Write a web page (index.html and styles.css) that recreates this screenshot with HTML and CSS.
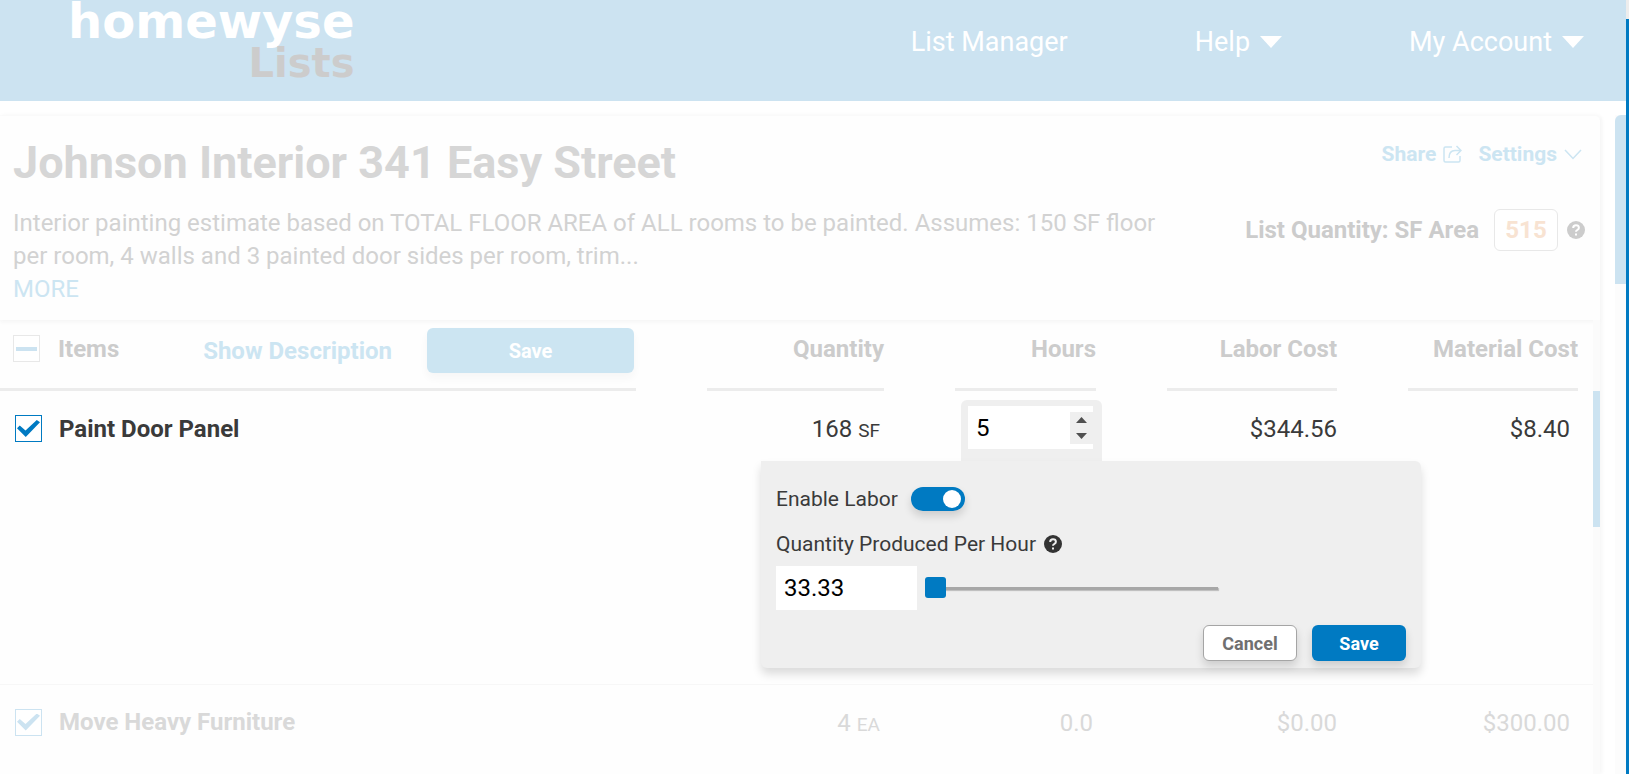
FILE: index.html
```html
<!DOCTYPE html>
<html lang="en">
<head>
  <meta charset="UTF-8" />
  <meta name="viewport" content="width=device-width, initial-scale=1.0"/>
  <title>homewyse Lists</title>
  <link rel="stylesheet" href="styles.css">
</head>
<body>

<div class="page">
  <header class="topbar">
    <a class="logo" href="#">
      <span class="logo-name">homewyse</span>
      <span class="logo-sub">Lists</span>
    </a>
    <nav class="nav">
      <a href="#">List Manager</a>
      <a href="#">Help <svg class="caret" viewBox="0 0 22 12"><path d="M0 0h22L11 12z"/></svg></a>
      <a href="#">My Account <svg class="caret" viewBox="0 0 22 12"><path d="M0 0h22L11 12z"/></svg></a>
    </nav>
  </header>

  <main class="main">
    <section class="panel">
      <div class="panel-head">
        <div class="about">
          <h1>Johnson Interior 341 Easy Street</h1>
          <p>Interior painting estimate based on TOTAL FLOOR AREA of ALL rooms to be painted. Assumes: 150 SF floor per room, 4 walls and 3 painted door sides per room, trim...</p>
          <a class="more" href="#">MORE</a>
        </div>
        <div class="side">
          <div class="actions">
            <a href="#">Share
              <svg width="19" height="18" viewBox="0 0 19 18"><path d="M9 2H2.500Q1 2 1 3.500V15.500Q1 17 2.500 17H15.500Q17 17 17 15.500V11M6 13Q6 5.500 12 5.500H17.500M13.500 1L18 5.500L13.500 10"/></svg>
            </a>
            <a href="#">Settings
              <svg width="18" height="11" viewBox="0 0 18 11"><path d="M1 1l8 8.500L17 1"/></svg>
            </a>
          </div>
          <div class="list-qty">
            <label for="listQty">List Quantity: SF Area</label>
            <input id="listQty" type="text" value="515">
            <svg class="help" viewBox="0 0 18 18"><circle cx="9" cy="9" r="9"/><path d="M6.200 7Q6.200 4.300 9 4.300T11.900 6.700Q11.900 8 10.400 8.800Q9 9.500 9 10.700M9 12.400V14.400"/></svg>
          </div>
        </div>
      </div>

      <div class="items">
        <table>
          <colgroup>
            <col><col class="c-qty"><col class="c-hours"><col class="c-cost"><col class="c-cost"><col class="c-end">
          </colgroup>
          <thead>
            <tr>
              <th>
                <div class="head first">
                  <input class="check some" type="checkbox" id="all">
                  <label for="all">Items</label>
                  <a class="show" href="#">Show Description</a>
                  <button class="save-all">Save</button>
                </div>
              </th>
              <th><div class="head">Quantity</div></th>
              <th><div class="head">Hours</div></th>
              <th><div class="head">Labor Cost</div></th>
              <th><div class="head">Material Cost</div></th>
              <th></th>
            </tr>
          </thead>
          <tbody>
            <tr class="open">
              <td>
                <div class="item">
                  <input class="check" type="checkbox" id="item1" checked>
                  <label for="item1">Paint Door Panel</label>
                </div>
              </td>
              <td class="qty">168 <small>SF</small></td>
              <td class="hours">
                <div class="tab">
                  <div class="stepper">
                    <input type="number" id="hours" aria-label="Hours" value="5">
                    <div class="arrows">
                      <button onclick="step(1)" aria-label="Increase hours"><svg viewBox="0 0 11 6"><path d="M0 6h11L5.500 0z"/></svg></button>
                      <button onclick="step(-1)" aria-label="Decrease hours"><svg viewBox="0 0 11 6"><path d="M0 0h11L5.500 6z"/></svg></button>
                    </div>
                  </div>
                  <div class="popup">
                    <div class="line">
                      <label for="labor">Enable Labor</label>
                      <input class="toggle" type="checkbox" id="labor" checked>
                    </div>
                    <div class="line">
                      <label for="rate">Quantity Produced Per Hour</label>
                      <svg class="help" viewBox="0 0 18 18"><circle cx="9" cy="9" r="9"/><path d="M6.200 7Q6.200 4.300 9 4.300T11.900 6.700Q11.900 8 10.400 8.800Q9 9.500 9 10.700M9 12.400V14.400"/></svg>
                    </div>
                    <div class="rate">
                      <input class="rate-box" type="text" id="rate" value="33.33">
                      <input class="slider" type="range" aria-label="Quantity per hour" min="0" max="100" value="0">
                    </div>
                    <div class="buttons">
                      <button class="cancel">Cancel</button>
                      <button class="save">Save</button>
                    </div>
                  </div>
                </div>
              </td>
              <td>$344.56</td>
              <td class="material">$8.40</td>
              <td></td>
            </tr>
            <tr class="faded">
              <td>
                <div class="item">
                  <input class="check" type="checkbox" id="item2" checked>
                  <label for="item2">Move Heavy Furniture</label>
                </div>
              </td>
              <td class="qty">4 <small>EA</small></td>
              <td class="hours">0.0</td>
              <td>$0.00</td>
              <td class="material">$300.00</td>
              <td></td>
            </tr>
          </tbody>
        </table>
        <div class="items-scroll"><div class="items-thumb"></div></div>
      </div>
    </section>
    <div class="page-scroll"><div class="page-thumb"></div></div>
  </main>
</div>
<div class="edge"></div>

<script>
  const hours = document.getElementById('hours');

  function step(n) {
    hours.value = Math.max(0, Number(hours.value) + n);
  }
</script>

</body>
</html>
```

FILE: styles.css
```css
* { box-sizing: border-box; }

body {
  margin: 0; background: #fff; color: #3a3a3a;
  font-family: Roboto, sans-serif; font-size: 24px;
  display: flex; height: 100vh; overflow: hidden;
}

a { color: #cce5f2; text-decoration: none; }
button, input { font-family: inherit; margin: 0; }
button { cursor: pointer; }
h1, p { margin: 0; }

.page { flex: 1; display: flex; flex-direction: column; min-width: 0; }

.edge {
  width: 3px; background: #007ac2; border-top: 19px solid #ededed;
}

/* top bar */
.topbar {
  flex: none; height: 101px; padding: 0 42px 0 68px;
  background: #cce3f1;
  display: flex; justify-content: space-between; align-items: flex-start;
}

.logo {
  display: flex; flex-direction: column; align-items: flex-end;
  font-family: "DejaVu Sans", Verdana, sans-serif; font-weight: bold;
}
.logo-name { font-size: 48px; line-height: 42px; color: #fff; }
.logo-sub { font-size: 40px; line-height: 42px; color: #ccc; }

.nav { display: flex; gap: 127px; padding-top: 26px; font-size: 27px; line-height: 32px; }
.nav a { color: #fff; display: flex; align-items: center; gap: 10px; }
.caret { width: 22px; height: 12px; fill: #fff; }

/* list header */
.main { flex: 1; display: flex; gap: 15px; padding-top: 14px; min-height: 0; }

.panel {
  flex: 1; min-width: 0; display: flex; flex-direction: column;
  background: #fefefe; border-top: 1px solid #fbfbfb;
  border-radius: 0 6px 0 0; box-shadow: 2px 0 4px #f6f6f6;
}

.panel-head {
  flex: none; min-height: 204px; padding: 20px 15px 0 13px;
  display: flex; justify-content: space-between;
  box-shadow: 0 2px 4px #f5f5f5;
}

.about { flex: 1; max-width: 1180px; line-height: 33px; color: #d2d2d2; }
h1 { font-size: 45px; line-height: 53px; font-weight: 700; color: #d6d6d6; margin-bottom: 18px; }

.side { display: flex; flex-direction: column; align-items: flex-end; }
.actions { display: flex; gap: 16px; font-size: 21px; line-height: 36px; font-weight: 700; padding-right: 3px; }
.actions a { display: flex; align-items: center; gap: 7px; }
.actions svg { fill: none; stroke: #cce5f2; stroke-width: 1.5; }

.list-qty {
  display: flex; align-items: center; margin-top: 37px;
  font-weight: 700; color: #ccc;
}
.list-qty input {
  width: 64px; height: 42px; margin: 0 9px 0 15px; padding: 0;
  border: 1px solid #e8e8e8; border-radius: 6px; background: #fff;
  font-size: 24px; font-weight: 700; text-align: center; color: #f8e3d2;
}

.help { width: 18px; height: 18px; fill: #333; }
.help path { fill: none; stroke: #efefef; stroke-width: 2; }
.list-qty .help { fill: #ccc; }
.list-qty .help path { stroke: #fff; }

/* items table */
.items { flex: 1; display: flex; align-items: flex-start; min-height: 0; }
table { flex: 1; width: 100%; table-layout: fixed; border-collapse: collapse; }
.c-qty { width: 248px; }
.c-hours { width: 212px; }
.c-cost { width: 241px; }
.c-end { width: 15px; }

th { padding: 0 0 0 71px; font-weight: 700; text-align: right; color: #ccc; }
th:first-child { padding: 0; }
.head { height: 71px; padding-top: 13px; line-height: 32px; border-bottom: 3px solid #ececec; }
.head.first { display: flex; padding: 8px 2px 0 13px; text-align: left; }
.first .check { margin-top: 7px; }
.first label { padding: 5px 0 0 18px; }
.show { margin-left: auto; padding-top: 7px; }

.check {
  appearance: none; flex: none; width: 27px; height: 27px;
  border: 1px solid #007ac2; background: #fff;
  display: grid; place-items: center;
}
.check:checked::before {
  content: ""; width: 23px; height: 17px; background: #007ac2;
  clip-path: polygon(0 48%, 12% 33%, 37% 62%, 86% 0, 100% 13%, 38% 100%);
}
.check.some { border-color: #e8e8e8; }
.check.some::before { content: ""; width: 21px; height: 4px; background: #cce3f1; }

.save-all {
  width: 207px; height: 45px; margin-left: 35px;
  border: none; border-radius: 6px; background: #cce5f2; color: #fff;
  font-size: 20px; font-weight: 700; box-shadow: 0 5px 8px #f6f6f6;
}

td { height: 100px; padding: 22px 0 0; vertical-align: top; text-align: right; line-height: 32px; }
tr.open td { height: 293px; border-bottom: 1px solid #f7f7f7; }
small { font-size: 19px; }
.qty { padding-right: 4px; }
.hours { position: relative; padding-right: 3px; }
.material { padding-right: 8px; }

.item { display: flex; align-items: center; gap: 17px; height: 31px; padding-left: 15px; font-weight: 700; text-align: left; }

.faded { color: #d9d9d9; }
.faded .check { border-color: #cce3f1; }
.faded .check::before { background: #cce3f1; }

.items-scroll { width: 7px; height: 100%; padding-top: 71px; background: #fbfbfb; }
.items-thumb { height: 136px; background: #cce3f1; }

.page-scroll { width: 11px; background: #fcfcfc; }
.page-thumb { height: 169px; background: #cce3f1; border-radius: 6px 0 0 0; }

/* hours editor, opens over the row */
.tab {
  position: absolute; top: 9px; right: -6px;
  width: 141px; height: 61px; padding: 6px 9px 0 7px;
  background: #efefef; border-radius: 6px 6px 0 0;
}
.stepper { display: flex; align-items: center; height: 43px; background: #fff; }
.stepper input {
  flex: 1; min-width: 0; padding: 0 8px; border: none; background: none;
  font-size: 24px; color: #000; appearance: textfield;
}
.stepper input::-webkit-inner-spin-button { appearance: none; margin: 0; }
.arrows { width: 23px; height: 32px; background: #efefef; }
.arrows button { display: grid; place-items: center; width: 100%; height: 16px; padding: 0; border: none; background: none; }
.arrows svg { width: 11px; height: 6px; fill: #505050; }

.popup {
  position: absolute; top: 61px; left: -200px; width: 660px;
  padding: 22px 15px 7px; background: #efefef; border-radius: 0 6px 6px 6px;
  box-shadow: 0 6px 10px rgba(0,0,0,0.14);
  font-size: 21px; text-align: left;
}
.line { display: flex; align-items: center; height: 32px; }
.line + .line { margin-top: 13px; }
.line .help { margin-left: 8px; }

.toggle {
  appearance: none; width: 54px; height: 24px; margin-left: 13px; padding: 3px 4px;
  border-radius: 12px; background: #007ac2; box-shadow: 0 5px 8px rgba(0,0,0,0.14);
  display: flex; justify-content: flex-end;
}
.toggle::before { content: ""; width: 18px; height: 18px; border-radius: 50%; background: #fff; }

.rate { display: flex; align-items: center; gap: 8px; margin-top: 6px; }
.rate-box { width: 141px; height: 44px; padding: 0 8px; border: none; background: #fff; color: #000; font-size: 24px; }

.slider { appearance: none; width: 293px; height: 21px; background: none; }
.slider::-webkit-slider-runnable-track { height: 3px; background: #a7a7a7; box-shadow: 1px 1px 1px #bbb; }
.slider::-webkit-slider-thumb {
  appearance: none; width: 21px; height: 21px; margin-top: -10px;
  border-radius: 3px; background: #007ac2;
}

.buttons { display: flex; justify-content: flex-end; gap: 15px; margin-top: 15px; }
.buttons button {
  width: 94px; height: 36px; border: none; border-radius: 6px; background: #007ac2; color: #fff;
  font-size: 18px; font-weight: 700; box-shadow: 0 5px 8px rgba(0,0,0,0.14);
}
.buttons .cancel { border: 1px solid #a5a5a5; background: #fff; color: #707070; }
```
